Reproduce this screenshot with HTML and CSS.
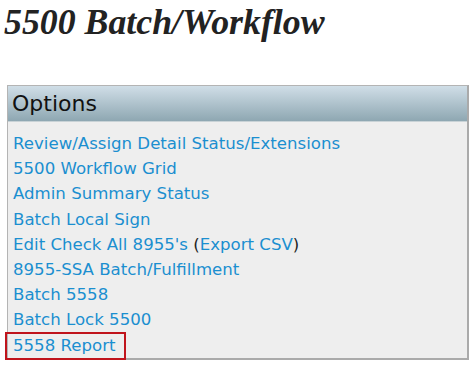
FILE: index.html
```html
<!DOCTYPE html>
<html lang="en">
<head>
    <meta charset="UTF-8">
    <title>5500 Batch/Workflow</title>
    <link rel="stylesheet" href="styles.css">
</head>
<body>
    <h1 class="page-title">5500 Batch/Workflow</h1>

    <div class="panel">
        <div class="panel-head">Options</div>
        <ul class="panel-list">
            <li><a href="#">Review/Assign Detail Status/Extensions</a></li>
            <li><a href="#">5500 Workflow Grid</a></li>
            <li><a href="#">Admin Summary Status</a></li>
            <li><a href="#">Batch Local Sign</a></li>
            <li><a href="#">Edit Check All 8955's</a> (<a href="#">Export CSV</a>)</li>
            <li><a href="#">8955-SSA Batch/Fulfillment</a></li>
            <li><a href="#">Batch 5558</a></li>
            <li><a href="#">Batch Lock 5500</a></li>
            <li class="marked"><a href="#">5558 Report</a></li>
        </ul>
    </div>
</body>
</html>
```

FILE: styles.css
```css
body {
    margin: 0;
    padding: 0 5px 0 7px;
    background: #fff;
}

.page-title {
    margin: 0 0 0 -3px;
    padding-top: 2px;
    font-family: 'Liberation Serif', 'Times New Roman', serif;
    font-style: italic;
    font-weight: bold;
    font-size: 35.8px;
    line-height: 40px;
    color: #222;
}

.panel {
    margin-top: 43px;
    border: 1px solid #b4b4b4;
    border-right: 2px solid #aaa;
    border-bottom: 2px solid #aaa;
    background: #eeeeee;
}

.panel-head {
    height: 35px;
    padding-left: 4px;
    font-family: 'DejaVu Sans', Verdana, sans-serif;
    font-size: 22px;
    line-height: 36px;
    color: #111;
    background: linear-gradient(#d0dee7, #8ea7b2);
    border-bottom: 1px solid #c8d2d6;
}

.panel-list {
    list-style: none;
    margin: 0;
    padding: 9px 0 0 0;
    font-family: 'DejaVu Sans', Verdana, sans-serif;
    font-size: 16.6px;
    line-height: 25.2px;
    color: #222;
}

.panel-list li {
    padding-left: 5px;
}

.panel-list a {
    color: #1b8fd0;
    text-decoration: none;
}

.panel-list .marked {
    display: inline-block;
    margin: -1px 0 -4px -3px;
    padding: 0 8px 0 6px;
    line-height: 24px;
    border: 2px solid #c0141c;
}
```
